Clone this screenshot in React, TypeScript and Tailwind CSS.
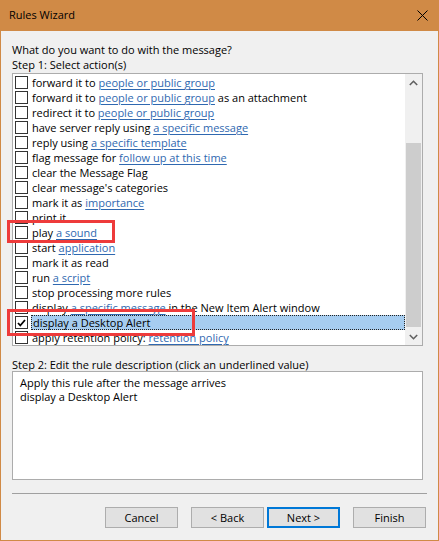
import React from "react";

type Seg = { t: string; link?: boolean };

const rows: Seg[][] = [
  [{ t: "forward it to " }, { t: "people or public group", link: true }],
  [{ t: "forward it to " }, { t: "people or public group", link: true }, { t: " as an attachment" }],
  [{ t: "redirect it to " }, { t: "people or public group", link: true }],
  [{ t: "have server reply using " }, { t: "a specific message", link: true }],
  [{ t: "reply using " }, { t: "a specific template", link: true }],
  [{ t: "flag message for " }, { t: "follow up at this time", link: true }],
  [{ t: "clear the Message Flag" }],
  [{ t: "clear message's categories" }],
  [{ t: "mark it as " }, { t: "importance", link: true }],
  [{ t: "print it" }],
  [{ t: "play " }, { t: "a sound", link: true }],
  [{ t: "start " }, { t: "application", link: true }],
  [{ t: "mark it as read" }],
  [{ t: "run " }, { t: "a script", link: true }],
  [{ t: "stop processing more rules" }],
  [{ t: "display " }, { t: "a specific message", link: true }, { t: " in the New Item Alert window" }],
  [{ t: "display a Desktop Alert" }],
  [{ t: "apply retention policy: " }, { t: "retention policy", link: true }],
];

const SELECTED = 16;

function Checkbox({ checked }: { checked?: boolean }) {
  return (
    <div className="w-[13px] h-[13px] shrink-0 border border-[#333333] bg-white flex items-center justify-center">
      {checked && (
        <svg width="9" height="8" viewBox="0 0 9 8">
          <path d="M1 4 L3.3 6.5 L8 1" fill="none" stroke="#000" strokeWidth="1.8" />
        </svg>
      )}
    </div>
  );
}

function Row({ segs, selected }: { segs: Seg[]; selected?: boolean }) {
  return (
    <div className="h-[15px] flex items-center pl-[2px] shrink-0 leading-[15px]">
      <Checkbox checked={selected} />
      <div
        className={
          selected
            ? "ml-[3px] h-[15px] flex-1 flex items-center pl-[1px] bg-[#a6cdf0] border border-dotted border-[#222]"
            : "ml-[3px] h-[15px] flex-1 flex items-center pl-[1px]"
        }
      >
        <span className="whitespace-nowrap">
          {segs.map((s, i) =>
            s.link ? (
              <span key={i} className="text-[#2f68b0] underline underline-offset-2">
                {s.t}
              </span>
            ) : (
              <span key={i}>{s.t}</span>
            )
          )}
        </span>
      </div>
    </div>
  );
}

function Btn({ label, focused }: { label: string; focused?: boolean }) {
  return (
    <button
      className={
        focused
          ? "w-[73px] h-[21px] bg-[#e1e1e1] border-2 border-[#0078d7] text-[11px] leading-none"
          : "w-[73px] h-[21px] bg-[#e1e1e1] border border-[#adadad] text-[11px] leading-none"
      }
    >
      {label}
    </button>
  );
}

export default function App() {
  return (
    <div className="w-[439px] h-[541px] bg-[#f0f0f0] border-x border-b border-[#d08a46] flex flex-col text-[11px] text-black font-['Open_Sans',sans-serif]">
      <div className="h-[31px] -mx-px bg-[#d08a46] flex items-center justify-between pl-[9px] pr-[11px] shrink-0">
        <span className="text-[11px]">Rules Wizard</span>
        <svg width="11" height="11" viewBox="0 0 11 11">
          <path d="M0.5 0.5 L10.5 10.5 M10.5 0.5 L0.5 10.5" stroke="#000" strokeWidth="1" />
        </svg>
      </div>

      <div className="flex flex-col px-[11px] pt-[10px]">
        <div className="h-[15px] leading-[15px] pt-px">What do you want to do with the message?</div>
        <div className="h-[15px] leading-[15px] pt-px">Step 1: Select action(s)</div>

        <div className="relative mt-[2px] w-[411px] h-[273px]">
          <div className="w-full h-full border border-[#acacac] bg-white flex overflow-hidden">
            <div className="flex-1 flex flex-col pt-px overflow-hidden">
              {rows.map((r, i) => (
                <Row key={i} segs={r} selected={i === SELECTED} />
              ))}
            </div>
            <div className="w-[17px] bg-[#f0f0f0] flex flex-col items-center shrink-0">
              <div className="h-[17px] w-full flex items-center justify-center">
                <svg width="9" height="6" viewBox="0 0 9 6">
                  <path d="M0.8 5 L4.5 1.3 L8.2 5" fill="none" stroke="#606060" strokeWidth="1.6" />
                </svg>
              </div>
              <div className="h-[52px]" />
              <div className="w-[15px] h-[184px] bg-[#cdcdcd]" />
              <div className="flex-1" />
              <div className="h-[17px] w-full flex items-center justify-center">
                <svg width="9" height="6" viewBox="0 0 9 6">
                  <path d="M0.8 1 L4.5 4.7 L8.2 1" fill="none" stroke="#606060" strokeWidth="1.6" />
                </svg>
              </div>
            </div>
          </div>
          <div className="absolute left-[-5px] top-[147px] w-[108px] h-[23px] border-[3px] border-[#ee3b3b]" />
          <div className="absolute left-[-5px] top-[236px] w-[188px] h-[27px] border-[3px] border-[#ee3b3b]" />
        </div>

        <div className="h-[15px] leading-[15px] mt-[10px] pt-px">
          Step 2: Edit the rule description (click an underlined value)
        </div>
        <div className="w-[411px] h-[109px] border border-[#acacac] bg-white pl-[7px] pt-[4px] leading-[14px]">
          <div>Apply this rule after the message arrives</div>
          <div>display a Desktop Alert</div>
        </div>

        <div className="mt-[13px] h-px bg-[#a0a0a0]" />

        <div className="mt-[13px] flex justify-end pr-px">
          <Btn label="Cancel" />
          <div className="w-[13px]" />
          <Btn label="< Back" />
          <div className="w-[3px]" />
          <Btn label="Next >" focused />
          <div className="w-[13px]" />
          <Btn label="Finish" />
        </div>
      </div>
    </div>
  );
}
